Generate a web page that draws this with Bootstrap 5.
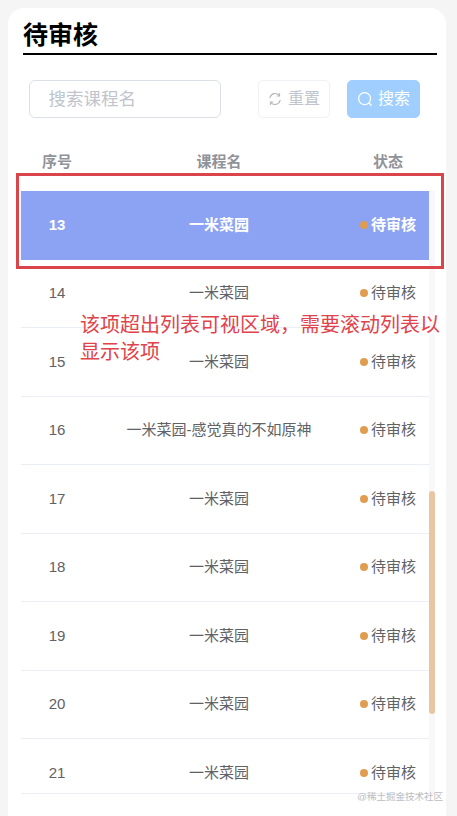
<!DOCTYPE html>
<html lang="zh">
<head>
<meta charset="utf-8">
<title>待审核</title>
<link href="https://cdn.jsdelivr.net/npm/bootstrap@5.3.0/dist/css/bootstrap.min.css" rel="stylesheet">
<style>
html,body{height:100%;}
body{background:#f5f5f5;margin:0;overflow:hidden;font-family:"Liberation Sans","Noto Sans CJK SC",sans-serif;position:relative;}
.sheet{margin:8px 11px 0 8px;height:808px;background:#fff;border-radius:16px 16px 0 0;padding:9px 9px 0 13px;overflow:hidden;}
.sheet-title{font-size:25px;font-weight:700;color:#000;line-height:36px;border-bottom:2px solid #000;height:38px;margin:0 0 25px 2px;}
.search-bar{height:38px;padding-left:8px;margin-bottom:33px;}
.search-input{width:192px;height:38px;border:1px solid #dcdfe6;border-radius:6px;font-size:17.5px;padding:1px 18.5px 0;color:#606266;}
.search-input::placeholder{color:#c0c4cc;}
.reset-btn,.find-btn{height:38px;font-size:16px;border-radius:5px;padding:0;display:flex;align-items:center;justify-content:center;gap:6px;}
.reset-btn{width:72px;margin-left:37px;background:#fff;border:1px solid #f0f1f4;color:#c0c4cc;}
.find-btn{width:73px;margin-left:17px;background:#a0cfff;border:1px solid #a0cfff;color:#fff;gap:5px;}
.head-row{height:22px;width:408px;color:#909399;font-weight:700;font-size:15px;line-height:22px;margin-bottom:18px;}
.cell-no{width:72px;text-align:center;flex:none;}
.cell-name{width:252px;text-align:center;flex:none;}
.cell-state{flex:1;min-width:0;display:flex;align-items:center;gap:3px;padding-left:15px;}
.head-row .cell-state{justify-content:center;padding-left:2px;}
.list-wrap{height:603px;width:414px;position:relative;overflow:hidden;border-bottom:1px solid #ebeef5;}
.list-rows{width:408px;}
.data-row{height:68.5px;border-bottom:1px solid #ebeef5;font-size:15px;color:#606266;}
.data-row.picked{background:#8ca3f3;color:#fff;font-weight:700;border-bottom:0;}
.data-row:last-child{border-bottom:0;}
.state-dot{width:8px;height:8px;border-radius:50%;background:#e09d4f;flex:none;}
.track{position:absolute;top:0;right:0;width:6px;height:100%;background:#f8f8fa;}
.thumb{position:absolute;top:300px;left:0;width:6px;height:223px;background:#eac5a2;border-radius:3px;}
.mark-box{position:absolute;left:16px;top:173px;width:428px;height:96px;border:3px solid #d9454a;pointer-events:none;}
.mark-note{position:absolute;left:80px;top:312px;width:364px;font-size:20px;line-height:27px;color:#e0434b;}
.stamp{position:absolute;right:14px;top:790px;font-size:9.5px;line-height:13px;color:#b9bcc2;}
</style>
</head>
<body>
<main class="sheet">
  <h1 class="sheet-title">待审核</h1>
  <form class="search-bar d-flex align-items-center" onsubmit="return false">
    <input class="search-input" type="text" placeholder="搜索课程名" aria-label="搜索课程名">
    <button class="btn reset-btn" type="button">
      <svg width="14" height="14" viewBox="0 0 16 16" fill="none" stroke="#b4b8c0" stroke-width="1.3" stroke-linecap="round"><path d="M2.2 6.4A6 6 0 0 1 12.9 4.2"/><path d="M13.8 9.6A6 6 0 0 1 3.1 11.8"/><path d="M13.2 1.8v2.8h-2.8"/><path d="M2.8 14.2v-2.8h2.8"/></svg>
      重置
    </button>
    <button class="btn find-btn" type="button">
      <svg width="16" height="16" viewBox="0 0 16 16" fill="none" stroke="#fff" stroke-width="1.3" stroke-linecap="round"><circle cx="7.6" cy="7.6" r="6"/><path d="M12 12l2.2 2.2"/></svg>
      搜索
    </button>
  </form>
  <div class="head-row d-flex">
    <div class="cell-no">序号</div>
    <div class="cell-name">课程名</div>
    <div class="cell-state">状态</div>
  </div>
  <div class="list-wrap">
    <div class="list-rows">
      <div class="data-row picked d-flex align-items-center"><div class="cell-no">13</div><div class="cell-name">一米菜园</div><div class="cell-state"><span class="state-dot"></span>待审核</div></div>
      <div class="data-row d-flex align-items-center"><div class="cell-no">14</div><div class="cell-name">一米菜园</div><div class="cell-state"><span class="state-dot"></span>待审核</div></div>
      <div class="data-row d-flex align-items-center"><div class="cell-no">15</div><div class="cell-name">一米菜园</div><div class="cell-state"><span class="state-dot"></span>待审核</div></div>
      <div class="data-row d-flex align-items-center"><div class="cell-no">16</div><div class="cell-name">一米菜园-感觉真的不如原神</div><div class="cell-state"><span class="state-dot"></span>待审核</div></div>
      <div class="data-row d-flex align-items-center"><div class="cell-no">17</div><div class="cell-name">一米菜园</div><div class="cell-state"><span class="state-dot"></span>待审核</div></div>
      <div class="data-row d-flex align-items-center"><div class="cell-no">18</div><div class="cell-name">一米菜园</div><div class="cell-state"><span class="state-dot"></span>待审核</div></div>
      <div class="data-row d-flex align-items-center"><div class="cell-no">19</div><div class="cell-name">一米菜园</div><div class="cell-state"><span class="state-dot"></span>待审核</div></div>
      <div class="data-row d-flex align-items-center"><div class="cell-no">20</div><div class="cell-name">一米菜园</div><div class="cell-state"><span class="state-dot"></span>待审核</div></div>
      <div class="data-row d-flex align-items-center"><div class="cell-no">21</div><div class="cell-name">一米菜园</div><div class="cell-state"><span class="state-dot"></span>待审核</div></div>
    </div>
    <div class="track"><div class="thumb"></div></div>
  </div>
</main>
<div class="mark-box"></div>
<p class="mark-note m-0">该项超出列表可视区域，需要滚动列表以显示该项</p>
<div class="stamp">@稀土掘金技术社区</div>
</body>
</html>
